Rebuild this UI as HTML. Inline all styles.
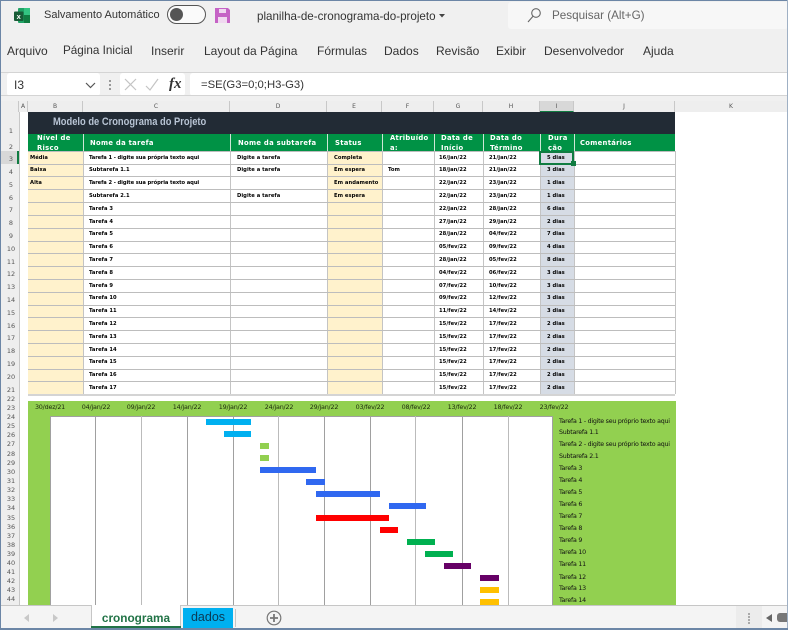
<!DOCTYPE html>
<html lang="pt"><head><meta charset="utf-8"><title>cronograma</title>
<style>
html,body{margin:0;padding:0;background:#f0f0f0}
#p{position:relative;width:788px;height:630px;overflow:hidden;background:#f0f0f0;font-family:"Liberation Sans",sans-serif;filter:blur(.3px)}
#p div,#p span,#p svg{position:absolute}
.u{font-size:12px;color:#333;white-space:nowrap;line-height:16px}
.m{top:43px}
.ch{top:101px;height:11px;background:#eee;border-right:1px solid #c8c8c8;box-sizing:border-box;font-size:6px;line-height:12px;text-align:center;color:#555;font-family:"DejaVu Sans",sans-serif}
.rh{left:4px;width:14px;text-align:center;font-size:6.5px;line-height:9px;color:#555;font-family:"DejaVu Sans",sans-serif;white-space:nowrap}
.hl{left:28px;width:647px;height:1px;background:#bdbdbd}
.vl{width:1px;top:151px;height:243px;background:#c4c4c4}
.t{font:bold 5.2px/12.8px "DejaVu Sans",sans-serif;color:#000;white-space:nowrap;letter-spacing:.05px}
.h{font:bold 6.8px/10px "DejaVu Sans",sans-serif;color:#fff;letter-spacing:.3px;overflow:hidden;top:133px;height:18px;white-space:nowrap}
.g{top:416px;height:190px;width:1px;background:#a0a0a0}
.b{height:6px}
.ax{top:403px;width:50px;text-align:center;font:6.4px/8px "DejaVu Sans",sans-serif;color:#1c2a0c;white-space:nowrap;letter-spacing:-.2px}
.lb{left:559px;font:6.3px/8px "DejaVu Sans",sans-serif;color:#111;white-space:nowrap;letter-spacing:-.25px}
</style></head><body><div id="p">

<!-- title bar -->
<svg style="left:14px;top:8px" width="16" height="16" viewBox="0 0 16 16"><rect x="4" y="0" width="12" height="15" rx="1" fill="#21a366"/><rect x="10" y="0" width="6" height="7" fill="#33c481"/><rect x="10" y="7" width="6" height="8" fill="#107c41"/><rect x="0" y="3.5" width="9.5" height="9.5" rx="1" fill="#185c37"/><text x="4.7" y="11" font-size="7.5" font-weight="bold" fill="#fff" text-anchor="middle" font-family="Liberation Sans">x</text></svg>
<div class="u" style="left:44px;top:7px;font-size:11px">Salvamento Automático</div>
<div style="left:167px;top:5px;width:39px;height:19px;box-sizing:border-box;border:1.3px solid #555;border-radius:10px;background:#fafafa"></div>
<div style="left:170px;top:8px;width:13px;height:13px;border-radius:50%;background:#555"></div>
<svg style="left:215px;top:8px" width="16" height="16" viewBox="0 0 16 16"><path d="M0 0h13l2 2v13H0z" fill="#c562c5"/><rect x="4" y="1" width="7" height="4" fill="#f0d8f0"/><rect x="3" y="9" width="9" height="6" fill="#f0d8f0"/></svg>
<div class="u" style="left:257px;top:9px;font-size:11.6px">planilha-de-cronograma-do-projeto</div>
<svg style="left:439px;top:14px" width="6" height="4"><path d="M0 0h6L3 3.5z" fill="#444"/></svg>
<div style="left:508px;top:2px;width:280px;height:27px;background:#f7f7f7;border-radius:3px"></div>
<svg style="left:526px;top:7px" width="16" height="16" viewBox="0 0 16 16" fill="none" stroke="#666" stroke-width="1.1"><circle cx="10" cy="6" r="4.3"/><path d="M7 9.3L2 15"/></svg>
<div class="u" style="left:552px;top:8px;font-size:11.7px;color:#666">Pesquisar (Alt+G)</div>

<!-- menu -->
<div class="u m" style="left:7px">Arquivo</div>
<div class="u m" style="left:63px;font-size:11.7px">Página Inicial</div>
<div class="u m" style="left:151px">Inserir</div>
<div class="u m" style="left:204px">Layout da Página</div>
<div class="u m" style="left:317px">Fórmulas</div>
<div class="u m" style="left:384px">Dados</div>
<div class="u m" style="left:436px">Revisão</div>
<div class="u m" style="left:496px">Exibir</div>
<div class="u m" style="left:544px">Desenvolvedor</div>
<div class="u m" style="left:643px">Ajuda</div>

<!-- formula bar -->
<div style="left:1px;top:72px;width:787px;height:1px;background:#d4d4d4"></div>
<div style="left:7px;top:73px;width:93px;height:23px;background:#fff;border-radius:3px"></div>
<div class="u" style="left:14px;top:77px;font-size:12px">I3</div>
<svg style="left:85px;top:82px" width="11" height="7" fill="none" stroke="#555" stroke-width="1.2"><path d="M1 1l4.500 4.500L10 1"/></svg>
<div style="left:109px;top:80px;width:2px;height:2px;background:#999;box-shadow:0 4px #999,0 8px #999"></div>
<div style="left:120px;top:73px;width:65px;height:23px;background:#fff;border-radius:3px"></div>
<svg style="left:124px;top:77px" width="36" height="16" fill="none" stroke="#c4c4c4" stroke-width="1.2"><path d="M1 2l11 11M12 2L1 13M22 9l4 4 8-11"/></svg>
<div style="left:169px;top:75px;font:italic bold 15px/18px 'Liberation Serif',serif;color:#333">fx</div>
<div style="left:190px;top:73px;width:598px;height:23px;background:#fff;border-radius:3px 0 0 3px"></div>
<div class="u" style="left:201px;top:77px;font-size:11.3px">=SE(G3=0;0;H3-G3)</div>
<div style="left:1px;top:95px;width:787px;height:1px;background:#d4d4d4"></div>

<!-- column headers -->
<div class="ch" style="left:1px;width:18px"></div>
<div class="ch" style="left:19px;width:9px">A</div>
<div class="ch" style="left:28px;width:55px">B</div>
<div class="ch" style="left:83px;width:147px">C</div>
<div class="ch" style="left:230px;width:97px">D</div>
<div class="ch" style="left:327px;width:55px">E</div>
<div class="ch" style="left:382px;width:52px">F</div>
<div class="ch" style="left:434px;width:49px">G</div>
<div class="ch" style="left:483px;width:57px">H</div>
<div class="ch" style="left:540px;width:34px;background:#d8d8d8;border-bottom:1px solid #107c41">I</div>
<div class="ch" style="left:574px;width:101px">J</div>
<div class="ch" style="left:675px;width:113px">K</div>

<!-- sheet -->
<div style="left:1px;top:112px;width:18px;height:494px;background:#eee;border-right:1px solid #c8c8c8"></div>
<div style="left:20px;top:112px;width:767px;height:494px;background:#fff"></div>

<div style="left:28px;top:112px;width:647px;height:22px;background:#222b35"></div>
<div style="left:53px;top:116px;font:bold 11px/13px 'Liberation Sans',sans-serif;color:#b8c4d4;white-space:nowrap;transform:scaleX(.85);transform-origin:0 0">Modelo de Cronograma do Projeto</div>

<div style="left:28px;top:134px;width:647px;height:17px;background:#009245"></div>
<div class="vl" style="left:83px;top:134px;height:17px;background:#cde6d6"></div>
<div class="vl" style="left:230px;top:134px;height:17px;background:#cde6d6"></div>
<div class="vl" style="left:327px;top:134px;height:17px;background:#cde6d6"></div>
<div class="vl" style="left:382px;top:134px;height:17px;background:#cde6d6"></div>
<div class="vl" style="left:434px;top:134px;height:17px;background:#cde6d6"></div>
<div class="vl" style="left:483px;top:134px;height:17px;background:#cde6d6"></div>
<div class="vl" style="left:540px;top:134px;height:17px;background:#cde6d6"></div>
<div class="vl" style="left:574px;top:134px;height:17px;background:#cde6d6"></div>
<div class="h" style="left:37px;width:45px">Nível de<br>Risco</div>
<div class="h" style="left:90px;width:130px;top:138px;height:10px">Nome da tarefa</div>
<div class="h" style="left:238px;width:85px;top:138px;height:10px">Nome da subtarefa</div>
<div class="h" style="left:335px;width:45px;top:138px;height:10px">Status</div>
<div class="h" style="left:390px;width:44px">Atribuído<br>a:</div>
<div class="h" style="left:441px;width:42px">Data de<br>Início</div>
<div class="h" style="left:490px;width:50px">Data do<br>Término</div>
<div class="h" style="left:548px;width:26px">Dura<br>ção</div>
<div class="h" style="left:580px;width:90px;top:138px;height:10px">Comentários</div>

<!-- fills -->
<div style="left:28px;top:151px;width:55px;height:243px;background:#fff2cc"></div>
<div style="left:327px;top:151px;width:55px;height:243px;background:#fff2cc"></div>
<div style="left:540px;top:151px;width:34px;height:243px;background:#d6dce5"></div>

<!-- grid -->
<div class="vl" style="left:83px"></div><div class="vl" style="left:230px"></div><div class="vl" style="left:327px"></div><div class="vl" style="left:382px"></div><div class="vl" style="left:434px"></div><div class="vl" style="left:483px"></div><div class="vl" style="left:540px"></div><div class="vl" style="left:574px"></div><div class="vl" style="left:675px"></div>
<div class="hl" style="top:151px"></div><div class="hl" style="top:164px"></div><div class="hl" style="top:176px"></div><div class="hl" style="top:189px"></div><div class="hl" style="top:202px"></div><div class="hl" style="top:215px"></div><div class="hl" style="top:228px"></div><div class="hl" style="top:241px"></div><div class="hl" style="top:253px"></div><div class="hl" style="top:266px"></div><div class="hl" style="top:279px"></div><div class="hl" style="top:292px"></div><div class="hl" style="top:305px"></div><div class="hl" style="top:317px"></div><div class="hl" style="top:330px"></div><div class="hl" style="top:343px"></div><div class="hl" style="top:356px"></div><div class="hl" style="top:369px"></div><div class="hl" style="top:381px"></div><div class="hl" style="top:394px;height:2px;background:#d4d4d4"></div>

<!-- row text -->
<div class="t" style="left:30px;top:151.500px">Média</div><div class="t" style="left:89px;top:151.500px;letter-spacing:-.08px">Tarefa 1 - digite sua própria texto aqui</div><div class="t" style="left:237px;top:151.500px">Digite a tarefa</div><div class="t" style="left:334px;top:151.500px">Completa</div><div class="t" style="left:439px;top:151.500px">16/jan/22</div><div class="t" style="left:489px;top:151.500px">21/jan/22</div><div class="t" style="left:547px;top:151.500px">5 dias</div>
<div class="t" style="left:30px;top:164.300px">Baixa</div><div class="t" style="left:89px;top:164.300px">Subtarefa 1.1</div><div class="t" style="left:237px;top:164.300px">Digite a tarefa</div><div class="t" style="left:334px;top:164.300px">Em espera</div><div class="t" style="left:388px;top:164.300px">Tom</div><div class="t" style="left:439px;top:164.300px">18/jan/22</div><div class="t" style="left:489px;top:164.300px">21/jan/22</div><div class="t" style="left:547px;top:164.300px">3 dias</div>
<div class="t" style="left:30px;top:177.100px">Alta</div><div class="t" style="left:89px;top:177.100px;letter-spacing:-.08px">Tarefa 2 - digite sua própria texto aqui</div><div class="t" style="left:334px;top:177.100px">Em andamento</div><div class="t" style="left:439px;top:177.100px">22/jan/22</div><div class="t" style="left:489px;top:177.100px">23/jan/22</div><div class="t" style="left:547px;top:177.100px">1 dias</div>
<div class="t" style="left:89px;top:189.900px">Subtarefa 2.1</div><div class="t" style="left:237px;top:189.900px">Digite a tarefa</div><div class="t" style="left:334px;top:189.900px">Em espera</div><div class="t" style="left:439px;top:189.900px">22/jan/22</div><div class="t" style="left:489px;top:189.900px">23/jan/22</div><div class="t" style="left:547px;top:189.900px">1 dias</div>
<div class="t" style="left:89px;top:202.700px">Tarefa 3</div><div class="t" style="left:439px;top:202.700px">22/jan/22</div><div class="t" style="left:489px;top:202.700px">28/jan/22</div><div class="t" style="left:547px;top:202.700px">6 dias</div>
<div class="t" style="left:89px;top:215.500px">Tarefa 4</div><div class="t" style="left:439px;top:215.500px">27/jan/22</div><div class="t" style="left:489px;top:215.500px">29/jan/22</div><div class="t" style="left:547px;top:215.500px">2 dias</div>
<div class="t" style="left:89px;top:228.300px">Tarefa 5</div><div class="t" style="left:439px;top:228.300px">28/jan/22</div><div class="t" style="left:489px;top:228.300px">04/fev/22</div><div class="t" style="left:547px;top:228.300px">7 dias</div>
<div class="t" style="left:89px;top:241.100px">Tarefa 6</div><div class="t" style="left:439px;top:241.100px">05/fev/22</div><div class="t" style="left:489px;top:241.100px">09/fev/22</div><div class="t" style="left:547px;top:241.100px">4 dias</div>
<div class="t" style="left:89px;top:253.900px">Tarefa 7</div><div class="t" style="left:439px;top:253.900px">28/jan/22</div><div class="t" style="left:489px;top:253.900px">05/fev/22</div><div class="t" style="left:547px;top:253.900px">8 dias</div>
<div class="t" style="left:89px;top:266.700px">Tarefa 8</div><div class="t" style="left:439px;top:266.700px">04/fev/22</div><div class="t" style="left:489px;top:266.700px">06/fev/22</div><div class="t" style="left:547px;top:266.700px">3 dias</div>
<div class="t" style="left:89px;top:279.500px">Tarefa 9</div><div class="t" style="left:439px;top:279.500px">07/fev/22</div><div class="t" style="left:489px;top:279.500px">10/fev/22</div><div class="t" style="left:547px;top:279.500px">3 dias</div>
<div class="t" style="left:89px;top:292.300px">Tarefa 10</div><div class="t" style="left:439px;top:292.300px">09/fev/22</div><div class="t" style="left:489px;top:292.300px">12/fev/22</div><div class="t" style="left:547px;top:292.300px">3 dias</div>
<div class="t" style="left:89px;top:305.100px">Tarefa 11</div><div class="t" style="left:439px;top:305.100px">11/fev/22</div><div class="t" style="left:489px;top:305.100px">14/fev/22</div><div class="t" style="left:547px;top:305.100px">3 dias</div>
<div class="t" style="left:89px;top:317.900px">Tarefa 12</div><div class="t" style="left:439px;top:317.900px">15/fev/22</div><div class="t" style="left:489px;top:317.900px">17/fev/22</div><div class="t" style="left:547px;top:317.900px">2 dias</div>
<div class="t" style="left:89px;top:330.700px">Tarefa 13</div><div class="t" style="left:439px;top:330.700px">15/fev/22</div><div class="t" style="left:489px;top:330.700px">17/fev/22</div><div class="t" style="left:547px;top:330.700px">2 dias</div>
<div class="t" style="left:89px;top:343.500px">Tarefa 14</div><div class="t" style="left:439px;top:343.500px">15/fev/22</div><div class="t" style="left:489px;top:343.500px">17/fev/22</div><div class="t" style="left:547px;top:343.500px">2 dias</div>
<div class="t" style="left:89px;top:356.300px">Tarefa 15</div><div class="t" style="left:439px;top:356.300px">15/fev/22</div><div class="t" style="left:489px;top:356.300px">17/fev/22</div><div class="t" style="left:547px;top:356.300px">2 dias</div>
<div class="t" style="left:89px;top:369.100px">Tarefa 16</div><div class="t" style="left:439px;top:369.100px">15/fev/22</div><div class="t" style="left:489px;top:369.100px">17/fev/22</div><div class="t" style="left:547px;top:369.100px">2 dias</div>
<div class="t" style="left:89px;top:381.900px">Tarefa 17</div><div class="t" style="left:439px;top:381.900px">15/fev/22</div><div class="t" style="left:489px;top:381.900px">17/fev/22</div><div class="t" style="left:547px;top:381.900px">2 dias</div>

<!-- selected cell -->
<div style="left:539px;top:151px;width:35px;height:14px;box-sizing:border-box;border:2px solid #107c41"></div>
<div style="left:571px;top:161px;width:5px;height:5px;background:#107c41"></div>

<!-- row numbers -->
<div style="left:1px;top:151px;width:18px;height:13px;background:#d8d8d8;border-right:2px solid #107c41;box-sizing:border-box"></div>
<div class="rh" style="top:127px">1</div><div class="rh" style="top:143px">2</div><div class="rh" style="top:155px">3</div><div class="rh" style="top:168px">4</div><div class="rh" style="top:181px">5</div><div class="rh" style="top:194px">6</div><div class="rh" style="top:206px">7</div><div class="rh" style="top:219px">8</div><div class="rh" style="top:232px">9</div><div class="rh" style="top:245px">10</div><div class="rh" style="top:258px">11</div><div class="rh" style="top:270px">12</div><div class="rh" style="top:283px">13</div><div class="rh" style="top:296px">14</div><div class="rh" style="top:309px">15</div><div class="rh" style="top:322px">16</div><div class="rh" style="top:334px">17</div><div class="rh" style="top:347px">18</div><div class="rh" style="top:360px">19</div><div class="rh" style="top:373px">20</div><div class="rh" style="top:386px">21</div>
<div class="rh" style="top:395px">22</div><div class="rh" style="top:404px">23</div><div class="rh" style="top:413px">24</div><div class="rh" style="top:422px">25</div><div class="rh" style="top:431px">26</div><div class="rh" style="top:440px">27</div><div class="rh" style="top:450px">28</div><div class="rh" style="top:459px">29</div><div class="rh" style="top:468px">30</div><div class="rh" style="top:477px">31</div><div class="rh" style="top:486px">32</div><div class="rh" style="top:495px">33</div><div class="rh" style="top:504px">34</div><div class="rh" style="top:514px">35</div><div class="rh" style="top:523px">36</div><div class="rh" style="top:532px">37</div><div class="rh" style="top:541px">38</div><div class="rh" style="top:550px">39</div><div class="rh" style="top:559px">40</div><div class="rh" style="top:568px">41</div><div class="rh" style="top:577px">42</div><div class="rh" style="top:586px">43</div><div class="rh" style="top:595px">44</div>

<!-- chart -->
<div style="left:28px;top:401px;width:648px;height:205px;background:#92d050"></div>
<div style="left:50px;top:416px;width:503px;height:190px;background:#fff;border-top:1px solid #a0a0a0;border-left:1px solid #a0a0a0;border-right:1px solid #a0a0a0;box-sizing:border-box"></div>
<div class="g" style="left:95px"></div><div class="g" style="left:141px;background:#bbb"></div><div class="g" style="left:187px"></div><div class="g" style="left:233px"></div><div class="g" style="left:278px;background:#bbb"></div><div class="g" style="left:324px"></div><div class="g" style="left:370px"></div><div class="g" style="left:415px;background:#bbb"></div><div class="g" style="left:462px"></div><div class="g" style="left:508px;background:#bbb"></div>

<div class="ax" style="left:25px">30/dez/21</div><div class="ax" style="left:71px">04/jan/22</div><div class="ax" style="left:116px">09/jan/22</div><div class="ax" style="left:162px">14/jan/22</div><div class="ax" style="left:208px">19/jan/22</div><div class="ax" style="left:254px">24/jan/22</div><div class="ax" style="left:299px">29/jan/22</div><div class="ax" style="left:345px">03/fev/22</div><div class="ax" style="left:391px">08/fev/22</div><div class="ax" style="left:437px">13/fev/22</div><div class="ax" style="left:483px">18/fev/22</div><div class="ax" style="left:529px">23/fev/22</div>

<div class="b" style="left:206px;top:419px;width:45px;background:#00b0f0"></div>
<div class="b" style="left:224px;top:431px;width:27px;background:#00b0f0"></div>
<div class="b" style="left:260px;top:443px;width:9px;background:#92d050"></div>
<div class="b" style="left:260px;top:455px;width:9px;background:#92d050"></div>
<div class="b" style="left:260px;top:467px;width:56px;background:#3068f0"></div>
<div class="b" style="left:306px;top:479px;width:19px;background:#3068f0"></div>
<div class="b" style="left:316px;top:490.500px;width:64px;background:#3068f0"></div>
<div class="b" style="left:389px;top:503px;width:37px;background:#3068f0"></div>
<div class="b" style="left:316px;top:515px;width:73px;background:#f00"></div>
<div class="b" style="left:380px;top:527px;width:18px;background:#f00"></div>
<div class="b" style="left:407px;top:539px;width:28px;background:#00b050"></div>
<div class="b" style="left:425px;top:551px;width:28px;background:#00b050"></div>
<div class="b" style="left:444px;top:563px;width:27px;background:#660066"></div>
<div class="b" style="left:480px;top:575px;width:19px;background:#660066"></div>
<div class="b" style="left:480px;top:587px;width:19px;background:#ffc000"></div>
<div class="b" style="left:480px;top:599px;width:19px;background:#ffc000"></div>

<div class="lb" style="top:418px">Tarefa 1 - digite seu próprio texto aqui</div>
<div class="lb" style="top:429px">Subtarefa 1.1</div>
<div class="lb" style="top:441px">Tarefa 2 - digite seu próprio texto aqui</div>
<div class="lb" style="top:453px">Subtarefa 2.1</div>
<div class="lb" style="top:465px">Tarefa 3</div>
<div class="lb" style="top:477px">Tarefa 4</div>
<div class="lb" style="top:489px">Tarefa 5</div>
<div class="lb" style="top:501px">Tarefa 6</div>
<div class="lb" style="top:513px">Tarefa 7</div>
<div class="lb" style="top:525px">Tarefa 8</div>
<div class="lb" style="top:537px">Tarefa 9</div>
<div class="lb" style="top:549px">Tarefa 10</div>
<div class="lb" style="top:561px">Tarefa 11</div>
<div class="lb" style="top:574px">Tarefa 12</div>
<div class="lb" style="top:585px">Tarefa 13</div>
<div class="lb" style="top:597px">Tarefa 14</div>

<!-- tab bar -->
<div style="left:1px;top:605px;width:787px;height:24px;background:#f4f4f4;border-top:1px solid #c6c6c6;box-sizing:border-box"></div>
<svg style="left:24px;top:614px" width="34" height="9"><path d="M5 0v8L0 4zM29 0v8l5-4z" fill="#c8c8c8"/></svg>
<div style="left:91px;top:605px;width:90px;height:22px;background:#fff;border-left:1px solid #c6c6c6;border-right:1px solid #c6c6c6;box-sizing:border-box"></div>
<div style="left:91px;top:626px;width:90px;height:2px;background:#217346"></div>
<div style="left:91px;top:609px;width:90px;text-align:center;font:bold 11.800px/18px 'Liberation Sans',sans-serif;color:#217346">cronograma</div>
<div style="left:183px;top:608px;width:50px;height:20px;background:#00b0f0;text-align:center;font:12.500px/19px 'Liberation Sans',sans-serif;color:#0b3a55">dados</div>
<div style="left:235px;top:609px;width:1px;height:18px;background:#c6c6c6"></div>
<svg style="left:266px;top:610px" width="16" height="16" fill="none" stroke="#777" stroke-width="1.200"><circle cx="8" cy="8" r="6.800"/><path d="M8 4v8M4 8h8" stroke-width="1.800"/></svg>
<div style="left:736px;top:606px;width:52px;height:23px;background:#ececec"></div>
<div style="left:748px;top:613px;width:2px;height:2px;background:#aaa;box-shadow:0 3px #aaa,0 6px #aaa,0 9px #aaa"></div>
<div style="left:762px;top:606px;width:26px;height:23px;background:#f4f4f4"></div>
<svg style="left:766px;top:614px" width="7" height="9"><path d="M6 0v8L0 4z" fill="#666"/></svg>
<div style="left:777px;top:613px;width:11px;height:9px;background:#777;border-radius:3px 0 0 3px"></div>

<!-- window border -->
<div style="left:0;top:0;width:788px;height:1px;background:#6c86a6"></div>
<div style="left:0;top:0;width:1px;height:630px;background:#6c86a6"></div>
<div style="left:787px;top:0;width:1px;height:630px;background:#9fb0c4"></div>
<div style="left:0;top:628px;width:788px;height:2px;background:#6c86a6"></div>
</div></body></html>
